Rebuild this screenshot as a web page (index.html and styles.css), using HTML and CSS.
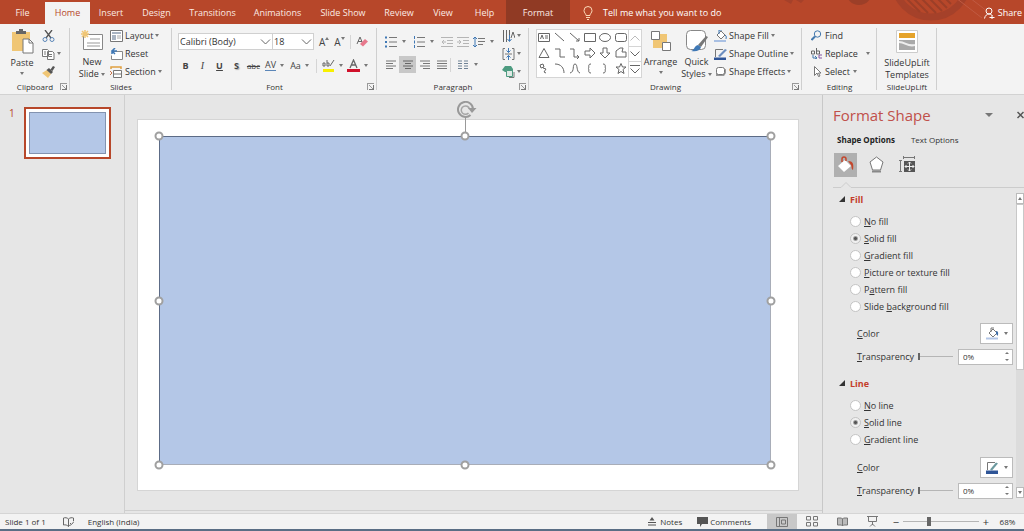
FILE: index.html
```html
<!DOCTYPE html>
<html lang="en">
<head>
<meta charset="utf-8">
<title>Presentation editor</title>
<link rel="stylesheet" href="styles.css">
</head>
<body>
<header class="titlebar">
  <svg class="banner-art" viewBox="0 0 240 24" aria-hidden="true">
    <g fill="none" stroke="#9c3f28">
      <circle cx="75" cy="-8" r="10" stroke-width="6"/>
      <circle cx="147" cy="-20" r="37" stroke-width="7" stroke="#a5412a"/>
      <path d="M120 -4l16 16M127 -4l17 17M135 -4l17 17M143 -4l15 15M151 -4l12 12M159 -4l8 8" stroke-width="2"/>
      <path d="M172 -2l26 20M186 -2l22 17" stroke-width="1" stroke="#c05a42"/>
    </g>
    <path d="M0 0h9l-2 4zM12 0h8l-3 3z" fill="#a5412a"/>
  </svg>
  <nav class="tabs">
    <button class="tab">File</button>
    <button class="tab tab-active">Home</button>
    <button class="tab">Insert</button>
    <button class="tab">Design</button>
    <button class="tab">Transitions</button>
    <button class="tab">Animations</button>
    <button class="tab">Slide Show</button>
    <button class="tab">Review</button>
    <button class="tab">View</button>
    <button class="tab">Help</button>
    <button class="tab tab-context">Format</button>
  </nav>
  <button class="tell-me">
    <svg width="10" height="14" viewBox="0 0 10 14" fill="none" stroke="#fbd9b8"><path d="M3 9.500C3 7.500 1 7 1 4.500a4 4 0 0 1 8 0C9 7 7 7.500 7 9.500zM3 11.500h4M4 13.500h2"/></svg>
    Tell me what you want to do
  </button>
  <button class="share">
    <svg width="11" height="12" viewBox="0 0 11 12" fill="none" stroke="#fff"><circle cx="5" cy="4" r="3"/><path d="M.5 11.500C1 8.500 3 7 5 7c1.500 0 2.500.6 3.200 1.500M5.500 10.500h5M8 8v4"/></svg>
    Share
  </button>
</header>

<section class="ribbon">
  <div class="group">
    <div class="group-body">
      <button class="big paste">
        <svg width="23" height="25" viewBox="0 0 23 25"><path d="M1 3h18v19H1z" fill="#f0c675"/><path d="M5 5V2h3V0h4v2h3v3z" fill="#666"/><path d="M12 10h6l4 4v10H12z" fill="#fff" stroke="#777"/><path d="M18 10v4h4" fill="none" stroke="#777"/></svg>
        <span>Paste</span><i class="caret"></i>
      </button>
      <div class="rows">
        <button class="cmd" aria-label="Cut"><svg width="13" height="12" viewBox="0 0 13 12" fill="none"><path d="M3 0l6 8M10 0L4 8" stroke="#555" stroke-width="1.300"/><circle cx="3" cy="9.500" r="2" stroke="#5b86b8"/><circle cx="10" cy="9.500" r="2" stroke="#5b86b8"/></svg></button>
        <button class="cmd" aria-label="Copy"><svg width="13" height="12" viewBox="0 0 13 12" fill="#fff" stroke="#777"><path d="M.5 1.500h5l1 1v6h-6zM5.500 3.500h5l1.500 1.500v6.500H5.500z"/><path d="M2 4h2M2 6h2M7 6.500h3M7 8.500h3"/></svg><i class="caret"></i></button>
        <button class="cmd" aria-label="Format Painter"><svg width="13" height="12" viewBox="0 0 13 12"><path d="M0 7l5-3 4 4-3 4z" fill="#f0c675"/><path d="M4.500 4L7 2l4 4-2 2zM8.500 3.500L11 0l2 1-2.500 4z" fill="#555"/></svg></button>
      </div>
    </div>
    <div class="group-name">Clipboard</div>
    <button class="launcher" aria-label="Clipboard settings"></button>
  </div>

  <div class="group">
    <div class="group-body">
      <button class="big new-slide">
        <svg width="23" height="22" viewBox="0 0 23 22"><path d="M2.500 4.500h19v15h-19z" fill="#fff" stroke="#888"/><path d="M9 9h10M6 13h13M6 16h13" stroke="#999"/><path d="M4 0v8M0 4h8M1 1l6 6M7 1L1 7" stroke="#f0c675" stroke-width="1.500"/></svg>
        <span>New<br>Slide <i class="caret"></i></span>
      </button>
      <div class="rows">
        <button class="cmd"><svg width="13" height="12" viewBox="0 0 13 12"><path d="M.5.500h12v11H.5z" fill="#fff" stroke="#777"/><path d="M2 2h9v2H2zM2 5h4v5H2z" fill="#a9b4c2"/><path d="M7 6h4M7 8h4" stroke="#aaa"/></svg>Layout <i class="caret"></i></button>
        <button class="cmd"><svg width="13" height="12" viewBox="0 0 13 12"><path d="M3.500 3.500h9v8h-11v-4" fill="#fff" stroke="#888"/><path d="M2 6V3h5M5 0L2 3l3 3" fill="none" stroke="#3f78b5" stroke-width="1.500"/></svg>Reset</button>
        <button class="cmd"><svg width="13" height="12" viewBox="0 0 13 12"><path d="M1 3V1h10v2" fill="none" stroke="#e0a040" stroke-width="1.500"/><path d="M3.500 4.500h8v7h-8zM3.500 8h8" fill="#fff" stroke="#777"/><path d="M0 5l2 2-2 2" fill="none" stroke="#c9744a"/></svg>Section <i class="caret"></i></button>
      </div>
    </div>
    <div class="group-name">Slides</div>
  </div>

  <div class="group">
    <div class="group-body stack">
      <div class="line font-line">
        <label class="combo combo-font"><select aria-label="Font"><option>Calibri (Body)</option></select><svg width="11" height="6" viewBox="0 0 11 6"><path d="M1 .5l4.500 4.500L10 .5" fill="none" stroke="#666"/></svg></label>
        <label class="combo combo-size"><select aria-label="Font size"><option>18</option></select><svg width="11" height="6" viewBox="0 0 11 6"><path d="M1 .5l4.500 4.500L10 .5" fill="none" stroke="#666"/></svg></label>
        <button class="letter grow">A<i class="up"></i></button>
        <button class="letter shrink">A<i class="caret"></i></button>
        <i class="sep"></i>
        <button class="letter" aria-label="Clear formatting"><svg width="12" height="12" viewBox="0 0 12 12"><path d="M1 8L4 1l2.500 6M2 5.500h4" fill="none" stroke="#666"/><path d="M4 8l5-5 3 2.500-5 5z" fill="#e7788c"/></svg></button>
      </div>
      <div class="line style-line">
        <button class="letter"><b>B</b></button>
        <button class="letter serif"><em>I</em></button>
        <button class="letter"><b><u>U</u></b></button>
        <button class="letter shadow"><b>S</b></button>
        <button class="letter abc"><s>abc</s></button>
        <button class="letter spacing"><span>AV</span><i class="caret"></i></button>
        <button class="letter"><span>Aa</span><i class="caret"></i></button>
        <i class="sep"></i>
        <button class="letter" aria-label="Highlight"><svg width="13" height="13" viewBox="0 0 13 13"><path d="M1 4h2v3H1zM5 1v6h2V4H5M8 7l4-6" fill="none" stroke="#666"/><path d="M1 10h11v3H1z" fill="#f8f000"/></svg><i class="caret"></i></button>
        <button class="letter" aria-label="Font color"><svg width="13" height="13" viewBox="0 0 13 13"><path d="M3 9l3.500-8L10 9M4 6h5" fill="none" stroke="#666" stroke-width="1.300"/><path d="M0 10h13v3H0z" fill="#d0102a"/></svg><i class="caret"></i></button>
      </div>
    </div>
    <div class="group-name">Font</div>
    <button class="launcher" aria-label="Font settings"></button>
  </div>

  <div class="group">
    <div class="group-body paragraph">
      <div class="stack">
        <div class="line list-line">
          <button class="ico" aria-label="Bullets"><svg width="12" height="12" viewBox="0 0 12 12"><path d="M4 1.500h8M4 6h8M4 10.500h8" stroke="#777"/><path d="M0 .500h2v2H0zM0 5h2v2H0zM0 9.500h2v2H0z" fill="#3f78b5"/></svg><i class="caret"></i></button>
          <button class="ico ico-spaced" aria-label="Numbering"><svg width="12" height="12" viewBox="0 0 12 12"><path d="M4 1.500h8M4 6h8M4 10.500h8" stroke="#777"/><path d="M1.500 0v3M1.500 4.500v3M1.500 9v3" stroke="#3f78b5"/></svg><i class="caret"></i></button>
          <button class="ico" aria-label="Decrease indent"><svg width="12" height="12" viewBox="0 0 12 12"><path d="M0 1.500h12M6 4.500h6M6 7.500h6M0 10.500h12M5 6H1m2-2L1 6l2 2" fill="none" stroke="#b5b5b5"/></svg></button>
          <button class="ico" aria-label="Increase indent"><svg width="12" height="12" viewBox="0 0 12 12"><path d="M0 1.500h12M6 4.500h6M6 7.500h6M0 10.500h12M0 6h4M2 4l2 2-2 2" fill="none" stroke="#b5b5b5"/></svg></button>
          <button class="ico" aria-label="Line spacing"><svg width="12" height="12" viewBox="0 0 12 12" fill="none"><path d="M5 2.500h7M5 5.500h7M5 8.500h5" stroke="#777"/><path d="M2 1v10M0 3l2-2 2 2M0 9l2 2 2-2" stroke="#3f78b5"/></svg><i class="caret"></i></button>
        </div>
        <div class="line align-line">
          <button class="ico" aria-label="Align left"><svg width="12" height="10" viewBox="0 0 12 10"><path d="M1 1h10M1 3.500h7M1 6h10M1 8.500h7" stroke="#777"/></svg></button>
          <button class="ico ico-on" aria-label="Center"><svg width="12" height="10" viewBox="0 0 12 10"><path d="M1 1h10M3 3.500h6M1 6h10M3 8.500h6" stroke="#666"/></svg></button>
          <button class="ico" aria-label="Align right"><svg width="12" height="10" viewBox="0 0 12 10"><path d="M1 1h10M4 3.500h7M1 6h10M4 8.500h7" stroke="#777"/></svg></button>
          <button class="ico" aria-label="Justify"><svg width="12" height="10" viewBox="0 0 12 10"><path d="M1 1h10M1 3.500h10M1 6h10M1 8.500h10" stroke="#777"/></svg></button>
          <i class="sep"></i>
          <button class="ico" aria-label="Columns"><svg width="12" height="10" viewBox="0 0 12 10"><path d="M1 1h4M7 1h4M1 3.500h4M7 3.500h4M1 6h4M7 6h4M1 8.500h4M7 8.500h4" stroke="#6f8295"/></svg><i class="caret"></i></button>
        </div>
      </div>
      <div class="rows">
        <button class="cmd" aria-label="Text direction"><svg width="13" height="12" viewBox="0 0 13 12" fill="none"><path d="M1.500 0v12M4.500 0v12M7.500 0v6M9 8l2-6 2 6" stroke="#666"/><path d="M7.500 5v6M5.500 9l2 2.500 2-2.500" stroke="#3f78b5"/></svg><i class="caret"></i></button>
        <button class="cmd" aria-label="Align text"><svg width="13" height="12" viewBox="0 0 13 12" fill="none"><path d="M3 .5H1v11h2M10 .5h2v11h-2M3 6h7" stroke="#777"/><path d="M6.500 0v4.500M4.500 2.500l2 2 2-2M6.500 12V7.500M4.500 9.500l2-2 2 2" stroke="#3f78b5"/></svg><i class="caret"></i></button>
        <button class="cmd" aria-label="SmartArt"><svg width="13" height="12" viewBox="0 0 13 12"><path d="M0 4l3-4h6l2 3v3H3z" fill="#4d9b80"/><path d="M4.500 4.500h6v6h-6z" fill="#dfe9e5" stroke="#4d9b80"/><path d="M7 11.500h5V6" fill="none" stroke="#777"/></svg><i class="caret"></i></button>
      </div>
    </div>
    <div class="group-name">Paragraph</div>
    <button class="launcher" aria-label="Paragraph settings"></button>
  </div>

  <div class="group">
    <div class="group-body drawing">
      <div class="gallery">
        <svg width="91" height="46" viewBox="0 0 91 46" fill="none" stroke="#666">
          <path d="M1.500 3.500h11v8h-11zM3.500 9l1.500-4 1.500 4M8 6h3M8 8h3M18 3l9 8M33 3l9 8m-3 0h3V8M47.500 3.500h11v8h-11z"/>
          <ellipse cx="68" cy="7.500" rx="5.500" ry="4"/><rect x="78.500" y="3.500" width="11" height="8" rx="2"/>
          <path d="M7 18.500l5 9H2zM18 19h5v8h5M33 19h4v8h5m-2-2l2 2-2 2M48 21h5v-3l5 5-5 5v-3h-5zM66 18h4v5h3l-5 5-5-5h3zM79 27v-6l4-3h3l-1 4h4v5z"/>
          <path d="M3 35l3-1 1 3-3 1zM6 38l3 1-2 3 2 1M18 34c6 0 9 4 9 9M33 43c5-1 2-9 5-9s1 8 5 9M54 34c-4 0-1 4-3 4.500 2 .5-1 4.500 3 4.500M66 34c4 0 1 4 3 4.500-2 .5 1 4.500-3 4.500M84 33.500l1.500 3.500h3.500l-3 2.500 1 4-3-2-3 2 1-4-3-2.500h3.500z"/>
        </svg>
        <div class="gallery-nav">
          <button aria-label="Scroll up"><svg width="10" height="6" viewBox="0 0 10 6"><path d="M.5 5.500L5 1l4.500 4.500" fill="none" stroke="#bbb"/></svg></button>
          <button aria-label="Scroll down"><svg width="10" height="6" viewBox="0 0 10 6"><path d="M.5.500L5 5 9.500.500" fill="none" stroke="#666"/></svg></button>
          <button aria-label="More shapes"><svg width="10" height="9" viewBox="0 0 10 9"><path d="M0 .5h10M.5 3.500L5 8l4.500-4.500" fill="none" stroke="#666"/></svg></button>
        </div>
      </div>
      <button class="big arrange">
        <svg width="22" height="22" viewBox="0 0 22 22"><path d="M8 4h9v8H8zM3 10h9v8H3z" fill="#f0c675"/><path d="M1.500 1.500h8v8h-8zM12.500 12.500h8v8h-8z" fill="#fff" stroke="#777"/></svg>
        <span>Arrange</span><i class="caret"></i>
      </button>
      <button class="big quick">
        <svg width="23" height="22" viewBox="0 0 23 22"><rect x="1.500" y=".5" width="19" height="19" rx="4" fill="#fff" stroke="#888"/><path d="M21 6l2 1-7 10-3-2z" fill="#777"/><path d="M6 21c3 0 3-5 7-6l3 2c-1 4-5 5-10 4z" fill="#3f78b5"/></svg>
        <span>Quick<br>Styles <i class="caret"></i></span>
      </button>
      <div class="rows">
        <button class="cmd"><svg width="13" height="12" viewBox="0 0 13 12"><path d="M3 5l4-4 4 4-4 4z" fill="#fff" stroke="#777"/><path d="M5 4V0h3M11 5c2 1 1 3 1 4" fill="none" stroke="#3f78b5"/><path d="M0 10h12v2H0z" fill="#a9c0e3"/></svg>Shape Fill <i class="caret"></i></button>
        <button class="cmd"><svg width="13" height="12" viewBox="0 0 13 12"><path d="M1.500 9V1.500H9" fill="none" stroke="#777"/><path d="M4 8l7-7 2 1-7 7z" fill="#6c8ebf"/><path d="M0 9.500h12V12H0z" fill="#2f5597"/></svg>Shape Outline <i class="caret"></i></button>
        <button class="cmd"><svg width="13" height="12" viewBox="0 0 13 12"><path d="M2 5v5h8l2-3V3z" fill="#999"/><rect x="2.500" y="1.500" width="8" height="7" rx="2" fill="#fff" stroke="#777"/></svg>Shape Effects <i class="caret"></i></button>
      </div>
    </div>
    <div class="group-name">Drawing</div>
    <button class="launcher" aria-label="Drawing settings"></button>
  </div>

  <div class="group">
    <div class="group-body editing">
      <div class="rows">
        <button class="cmd"><svg width="11" height="11" viewBox="0 0 11 11" fill="none" stroke="#4378ad"><circle cx="6.500" cy="4" r="3.200"/><path d="M4 6.500L.500 10" stroke-width="2"/></svg>Find</button>
        <button class="cmd"><svg width="11" height="11" viewBox="0 0 11 11" fill="none"><path d="M.5 3h3v3h-3zM5.500 0v6h3V3h-3" stroke="#666"/><path d="M2 7v3h4M4 8l2 2-2 1" stroke="#4378ad"/><path d="M11 7H8v3h3" stroke="#8655a0"/></svg>Replace <i class="caret wide"></i></button>
        <button class="cmd"><svg width="11" height="11" viewBox="0 0 11 11"><path d="M3.500.500v9L6 7l1.500 3.500 1.500-.5L7.500 7H10z" fill="#fff" stroke="#777"/></svg>Select <i class="caret"></i></button>
      </div>
    </div>
    <div class="group-name">Editing</div>
  </div>

  <div class="group">
    <div class="group-body addin">
      <button class="big">
        <svg width="22" height="23" viewBox="0 0 22 23"><path d="M.5.500h21v22H.5z" fill="#fff" stroke="#ccc"/><path d="M3 3h16v5H3z" fill="#e5a32b"/><path d="M3 10h16v10H3z" fill="#a9a9a9"/><path d="M3 12c7 0 8 5 16 3" fill="none" stroke="#eee" stroke-width="2"/></svg>
        <span>SlideUpLift<br>Templates</span>
      </button>
    </div>
    <div class="group-name">SlideUpLift</div>
  </div>
</section>

<main class="workspace">
  <aside class="thumbs">
    <span class="thumb-number">1</span>
    <button class="thumb" aria-label="Slide 1"><span class="thumb-shape"></span></button>
  </aside>
  <section class="canvas">
    <div class="slide">
      <div class="shape">
        <i class="stem"></i>
        <svg class="rotate" width="20" height="18" viewBox="0 0 20 18" fill="none"><path d="M13.500 14A7.500 7.500 0 1 1 16 8" stroke="#999" stroke-width="2"/><path d="M11.500 12A4.200 4.200 0 1 1 12.500 8" stroke="#a5a5a5" stroke-width="1.500"/><path d="M11 7h8.500L15 12z" fill="#999"/></svg>
        <i class="handle n w"></i><i class="handle n c"></i><i class="handle n e"></i>
        <i class="handle m w"></i><i class="handle m e"></i>
        <i class="handle s w"></i><i class="handle s c"></i><i class="handle s e"></i>
      </div>
    </div>
  </section>
  <aside class="panel">
    <div class="panel-head">
      <h1>Format Shape</h1>
      <button class="pane-menu" aria-label="Pane options"><i class="caret"></i></button>
      <button class="pane-close" aria-label="Close"><svg width="7" height="8" viewBox="0 0 7 8"><path d="M.5 1l6 6M6.500 1l-6 6" stroke="#555" stroke-width="1.500"/></svg></button>
    </div>
    <div class="panel-tabs"><button class="on">Shape Options</button><button>Text Options</button></div>
    <div class="panel-icons">
      <button class="on" aria-label="Fill and line"><svg width="19" height="18" viewBox="0 0 19 18"><path d="M12 5c5 0 6 3 5 9-2-1-1-3-2-5z" fill="#c4472d"/><path d="M2 10l7-6 6 6-7 6z" fill="#fff"/><path d="M6 6V3a2 2 0 0 1 4 0v2" fill="none" stroke="#c4472d" stroke-width="1.500"/></svg></button>
      <button aria-label="Effects"><svg width="17" height="18" viewBox="0 0 17 18"><path d="M8.500 1l6.500 5-2.500 8h-8L2 6z" fill="#fff" stroke="#777"/><path d="M4 15.500h9" stroke="#888" stroke-width="2"/></svg></button>
      <button aria-label="Size and properties"><svg width="17" height="18" viewBox="0 0 17 18" fill="none"><path d="M4 1.500h12M4.500 0v3M15.500 0v3M1.500 4v12M0 4.500h3M0 15.500h3" stroke="#777"/><path d="M5 5h11v11H5z" fill="#555"/><path d="M10.500 6v9M6 10.500h9M9 7.500l1.500-1.500L12 7.500M9 13.500l1.500 1.500 1.500-1.500M7.500 9L6 10.500 7.500 12M13.500 9l1.500 1.500-1.500 1.500" stroke="#eee"/></svg></button>
    </div>
    <div class="divider"><svg height="7" width="22" viewBox="0 0 22 7"><path d="M0 6.500h8l5-5 5 5h4" fill="none" stroke="#ccc"/></svg></div>
    <div class="panel-scroll">
      <div class="options">
        <section>
          <h2><svg width="6" height="6" viewBox="0 0 6 6"><path d="M6 0v6H0z" fill="#333"/></svg>Fill</h2>
          <div class="radios">
            <label><input type="radio" name="fill"><span><u>N</u>o fill</span></label>
            <label><input type="radio" name="fill" checked><span><u>S</u>olid fill</span></label>
            <label><input type="radio" name="fill"><span><u>G</u>radient fill</span></label>
            <label><input type="radio" name="fill"><span><u>P</u>icture or texture fill</span></label>
            <label><input type="radio" name="fill"><span>P<u>a</u>ttern fill</span></label>
            <label><input type="radio" name="fill"><span>Slide <u>b</u>ackground fill</span></label>
          </div>
          <div class="field"><span><u>C</u>olor</span><button class="swatch" aria-label="Fill color"><svg width="13" height="13" viewBox="0 0 13 13"><path d="M3 6l4-4 4 4-4 4z" fill="#fff" stroke="#777"/><path d="M5 5V1h3" fill="none" stroke="#777"/><path d="M10 4c3 0 2 3 2 5l-2-2z" fill="#3f6ea8"/><path d="M0 10.500h12v2H0z" fill="#b4c7e7"/></svg><i class="caret"></i></button></div>
          <div class="field"><label for="fill-t"><u>T</u>ransparency</label><input class="slider" type="range" value="0" aria-label="Fill transparency slider"><span class="spin"><input id="fill-t" type="text" value="0%"><span class="arrows"><i class="up"></i><i class="caret"></i></span></span></div>
        </section>
        <section>
          <h2><svg width="6" height="6" viewBox="0 0 6 6"><path d="M6 0v6H0z" fill="#333"/></svg>Line</h2>
          <div class="radios">
            <label><input type="radio" name="line"><span><u>N</u>o line</span></label>
            <label><input type="radio" name="line" checked><span><u>S</u>olid line</span></label>
            <label><input type="radio" name="line"><span><u>G</u>radient line</span></label>
          </div>
          <div class="field"><span><u>C</u>olor</span><button class="swatch" aria-label="Line color"><svg width="13" height="13" viewBox="0 0 13 13"><path d="M1.500 9V1.500H9" fill="none" stroke="#777"/><path d="M4 8.500l6-7 2 1-6 7z" fill="#6c9aa0"/><path d="M0 9.500h12V13H0z" fill="#2f5597"/></svg><i class="caret"></i></button></div>
          <div class="field"><label for="line-t"><u>T</u>ransparency</label><input class="slider" type="range" value="0" aria-label="Line transparency slider"><span class="spin"><input id="line-t" type="text" value="0%"><span class="arrows"><i class="up"></i><i class="caret"></i></span></span></div>
        </section>
      </div>
      <div class="scrollbar"><button aria-label="Scroll panel up"><i class="up"></i></button><div class="scroll-thumb"></div><button aria-label="Scroll panel down"><i class="caret"></i></button></div>
    </div>
  </aside>
</main>

<footer class="status">
  <span>Slide 1 of 1</span>
  <button class="proof" aria-label="Proofing"><svg width="11" height="10" viewBox="0 0 11 10" fill="none" stroke="#666"><path d="M5.500 2v7.500M5.500 2C4 .5 2 .5.500 1v7c2-.5 3.500 0 5 1.500C6 8.500 7 8 8 8M5.500 2C7 .5 9 .5 10.500 1v3M7 6l1.500 1.500L11 4.500"/></svg></button>
  <button>English (India)</button>
  <div class="views">
    <button class="notes"><svg width="8" height="9" viewBox="0 0 8 9"><path d="M0 5.500h8M0 8h8" stroke="#555"/><path d="M4 0l2.500 3.500h-5z" fill="#555"/></svg>Notes</button>
    <button class="comments"><svg width="11" height="10" viewBox="0 0 11 10"><path d="M0 0h11v7H5l-2 3V7H0z" fill="#555"/></svg>Comments</button>
    <button class="view on" aria-label="Normal view"><svg width="12" height="10" viewBox="0 0 12 10" fill="none" stroke="#777"><path d="M.5.500h11v9H.5zM3.500.500v9M5.500 3h4v4h-4z"/></svg></button>
    <button class="view" aria-label="Slide sorter"><svg width="12" height="11" viewBox="0 0 12 11" fill="none" stroke="#777"><path d="M.5.500h4v3.500h-4zM7.500.500h4v3.500h-4zM.5 6.500h4V10h-4zM7.500 6.500h4V10h-4z"/></svg></button>
    <button class="view" aria-label="Reading view"><svg width="11" height="10" viewBox="0 0 11 10"><path d="M.5 1h4l1 1 1-1h4v7h-4l-1 1-1-1h-4z" fill="#bbb" stroke="#777"/><path d="M5.500 2v7" stroke="#777"/></svg></button>
    <button class="view" aria-label="Slide show"><svg width="11" height="11" viewBox="0 0 11 11" fill="none" stroke="#777"><path d="M0 .5h11M1.500 1v4.500h8V1M5.500 6v3M3 10.500L5.500 8 8 10.500"/></svg></button>
    <button class="zoom-step">−</button>
    <input class="zoom" type="range" min="0" max="100" value="33" aria-label="Zoom">
    <button class="zoom-step">+</button>
    <button class="zoom-value">68%</button>
  </div>
</footer>
</body>
</html>
```
FILE: styles.css
```css
* { box-sizing: border-box; }
html, body { height: 100%; margin: 0; }
body {
  display: flex;
  flex-direction: column;
  overflow: hidden;
  background: #e6e6e6;
  color: #333;
  font: 8px/12px "Open Sans", "Noto Sans", sans-serif;
}
button, input, select { font: inherit; color: inherit; }
button {
  display: inline-flex;
  align-items: center;
  justify-content: center;
  padding: 0;
  border: 0;
  background: none;
  white-space: nowrap;
}
svg { display: block; flex: none; }
.caret, .up {
  display: inline-block;
  flex: none;
  border: 2px solid transparent;
  border-top: 3px solid #777;
  border-bottom: 0;
}
.up { border-top: 0; border-bottom: 3px solid #777; }

/* Title bar */
.titlebar { position: relative; display: flex; flex: none; height: 24px; background: #b7472a; color: #fff; }
.banner-art { position: absolute; top: 0; right: 0; width: 240px; height: 24px; }
.tabs {
  display: grid;
  grid-template-columns: 45px 45px 42px 49px 63px 67px 64px 48px 40px 43px 64px;
}
.tab { padding-top: 2px; color: #fbeae4; font-size: 9px; }
.tab-active { margin-top: 2px; padding-top: 0; background: #f3f3f3; color: #b7472a; }
.tab-context { background: #903a24; }
.tell-me { gap: 10px; margin-left: 13px; padding-top: 2px; font-size: 9px; }
.share { position: relative; gap: 3px; margin-left: auto; margin-right: 2px; padding-top: 2px; font-size: 9px; }

/* Ribbon */
.ribbon {
  display: grid;
  grid-template-columns: 70px 102px 205px 152px 273px 75px 60px;
  flex: none;
  height: 71px;
  background: #f3f3f3;
  border-bottom: 1px solid #d2d2d2;
  font-size: 9px;
}
.group { position: relative; display: flex; flex-direction: column; }
.group::after { content: ""; position: absolute; top: 4px; bottom: 4px; right: 0; width: 1px; background: #cfcfcf; }
.group-body { display: flex; flex: 1; padding-top: 3px; }
.group-name { height: 13px; text-align: center; font-size: 8px; line-height: 12px; }
.launcher {
  position: absolute;
  right: 3px;
  bottom: 4px;
  width: 7px;
  height: 7px;
  align-items: flex-end;
  justify-content: flex-end;
  border: 1px solid #999;
  border-right: 0;
  border-bottom: 0;
}
.launcher::after { content: ""; width: 4px; height: 4px; border: 1px solid #777; border-top: 0; border-left: 0; background: linear-gradient(45deg, transparent 40%, #999 40% 60%, transparent 60%) no-repeat; }
.big { flex-direction: column; justify-content: flex-start; align-items: center; padding-top: 3px; line-height: 12px; }
.big svg { margin-bottom: 4px; }
.big .caret { vertical-align: middle; }
.paste { width: 40px; margin-left: 2px; padding-top: 2px; }
.paste svg { margin-bottom: 3px; }
.paste .caret { margin-top: 3px; }
.new-slide { width: 36px; margin: 0 0 0 4px; }
.rows { display: grid; grid-auto-rows: 17px; gap: 1px; align-content: start; }
.cmd { justify-content: flex-start; gap: 2px; }
.stack { display: flex; flex-direction: column; padding-top: 9px; }
.line { display: flex; flex: none; align-items: center; height: 17px; }
.font-line { padding-left: 6px; }
.combo { display: flex; align-items: center; height: 17px; background: #fff; border: 1px solid #d0d0d0; padding-right: 1px; }
.combo select { appearance: none; flex: 1; min-width: 0; padding: 0 0 0 1px; border: 0; background: none; line-height: 14px; }
.combo-font { width: 95px; }
.combo-size { width: 41px; border-left: 0; }
.letter { gap: 4px; color: #444; }
.sep { width: 1px; height: 14px; background: #d5d5d5; }
.font-line .letter { margin-left: 5px; font-size: 10px; }
.font-line .sep { margin-left: 5px; }
.grow, .shrink { gap: 0; }
.grow .up, .shrink .caret { margin-bottom: 7px; }
.style-line {
  display: grid;
  grid-template-columns: 17px 17px 17px 17px 17px 25px 25px 8px 24px 26px;
  justify-items: center;
  margin-top: 7px;
  padding-left: 5px;
}
.serif { font-family: "Liberation Serif", serif; font-size: 10px; }
.shadow { text-shadow: 1px 1px 1px #aaa; }
.abc { font-size: 8px; }
.spacing span { border-bottom: 1px solid #5b86b8; line-height: 10px; }
.paragraph { gap: 4px; }
.paragraph .stack { padding: 6px 0 0 5px; }
.ico { gap: 5px; }
.list-line { padding-left: 3px; }
.list-line .ico { margin-right: 4px; }
.list-line .ico:first-child, .list-line .ico-spaced { margin-right: 7px; }
.align-line { margin-top: 6px; }
.align-line .ico { width: 17px; height: 17px; }
.align-line .ico:last-child { width: 32px; }
.ico-on { background: #c8c8c8; }
.drawing { padding-left: 7px; }
.gallery { display: flex; align-self: flex-start; height: 49px; margin-top: 2px; background: #fff; border: 1px solid #d5d5d5; }
.gallery-nav { display: grid; grid-template-rows: repeat(3, 1fr); width: 13px; border-left: 1px solid #d5d5d5; }
.gallery-nav button + button { border-top: 1px solid #d5d5d5; }
.arrange { width: 37px; }
.arrange .caret { margin-top: 3px; }
.quick { width: 35px; }
.editing { padding-left: 9px; }
.editing .cmd { gap: 3px; }
.wide { margin-left: 5px; }
.addin { justify-content: center; }

/* Workspace */
.workspace { display: flex; flex: 1; min-height: 0; }
.thumbs { display: flex; flex: none; align-items: flex-start; width: 125px; padding: 12px 0 0 9px; border-right: 1px solid #cfcfcf; }
.thumb-number { width: 15px; color: #b7472a; font-size: 10px; }
.thumb { width: 87px; height: 52px; padding: 3px; border: 2px solid #b7472a; background: #fff; }
.thumb-shape { flex: 1; align-self: stretch; background: #b4c7e7; border: 1px solid #8393b0; }
.canvas { display: flex; flex: 1; margin-bottom: 2px; padding: 24px 23px 19px 12px; border-bottom: 1px solid #cfcfcf; }
.slide { display: flex; flex: 1; padding: 16px 27px 25px 21px; background: #fff; border: 1px solid #d5d5d5; }
.shape { position: relative; flex: 1; background: #b4c7e7; box-shadow: inset 1px 1px #5c6b86, inset -1px -1px #a8adb8; }
.handle { position: absolute; width: 9px; height: 9px; border: 2px solid #a0a0a0; border-radius: 50%; background: #fff; transform: translate(-50%, -50%); }
.n { top: 0; }
.m { top: 50%; }
.s { top: 100%; }
.w { left: 0; }
.c { left: 50%; }
.e { left: 100%; }
.stem { position: absolute; left: 50%; bottom: 100%; width: 1px; height: 20px; background: #999; }
.rotate { position: absolute; left: 50%; bottom: 100%; margin: 0 0 17px -8px; }

/* Format pane */
.panel { display: flex; flex: none; flex-direction: column; width: 202px; border-left: 1px solid #c8c8c8; font-size: 9px; }
.panel-head, .panel-tabs, .panel-icons, .divider { display: flex; flex: none; }
.panel-head { align-items: center; height: 39px; padding-left: 10px; }
h1 { margin: 0; color: #c0504a; font-size: 15px; font-weight: 400; line-height: 20px; }
.pane-menu { margin-left: auto; margin-right: 24px; }
.pane-menu .caret { border-width: 4px 4px 0; }
.pane-close { width: 7px; }
.panel-tabs { gap: 16px; height: 12px; margin-bottom: 7px; padding-left: 14px; font-size: 8px; }
.panel-tabs .on { font-weight: 700; color: #222; }
.panel-icons { gap: 8px; padding-left: 11px; }
.panel-icons button { width: 23px; height: 24px; }
.panel-icons .on { background: #b0b0b0; }
.divider { margin: 4px 0 0 10px; }
.divider::after { content: ""; flex: 1; border-bottom: 1px solid #ccc; }
.panel-scroll { display: flex; flex: 1; min-height: 0; margin: 5px 0 15px; }
.options { flex: 1; min-width: 0; padding: 0 3px 0 16px; }
h2 { display: flex; align-items: center; gap: 5px; height: 13px; margin: 0; color: #c43d2a; font-size: 9px; font-weight: 700; }
h2 svg { margin-bottom: 2px; }
.radios { margin: 7px 0 7px 11px; }
.radios label { display: flex; align-items: center; gap: 3px; height: 17px; }
.radios input { appearance: none; width: 11px; height: 11px; margin: 0; border: 1px solid #c4c4c4; border-radius: 50%; background: #fff; }
.radios input:checked { background: radial-gradient(circle, #555 1px, #f0f0f0 3px); }
.field { display: flex; align-items: center; height: 23px; padding-left: 18px; }
.swatch { gap: 5px; width: 33px; height: 21px; margin-left: auto; border: 1px solid #bbb; background: #fff; }
.slider, .zoom { appearance: none; height: 12px; margin: 0; background: linear-gradient(#b5b5b5, #b5b5b5) center / 100% 1px no-repeat; }
.slider { flex: 1; min-width: 0; margin: 0 5px 0 4px; }
.slider::-webkit-slider-thumb { appearance: none; width: 2px; height: 7px; background: #666; }
.spin { display: flex; flex: none; width: 55px; height: 16px; border: 1px solid #bbb; background: #fff; }
.spin input { flex: 1; min-width: 0; padding: 0 0 0 4px; border: 0; background: none; font-size: 8px; }
.arrows { display: flex; flex-direction: column; align-items: center; justify-content: space-around; width: 11px; }
.arrows .up { border-bottom-width: 2px; }
.arrows .caret { border-top-width: 2px; }
section + section h2 { margin-top: 9px; }
section + section .radios { margin-bottom: 8px; }
.scrollbar { display: flex; flex: none; flex-direction: column; width: 8px; background: #dcdcdc; }
.scrollbar button { height: 11px; border: 1px solid #bbb; background: #fff; }
.scroll-thumb { height: 166px; margin-bottom: auto; background: #fff; border: 1px solid #c8c8c8; }

/* Status bar */
.status { display: flex; flex: none; align-items: center; height: 18px; padding-left: 5px; background: #f3f3f3; border-top: 1px solid #d5d5d5; border-bottom: 2px solid #5a6e85; }
.status button { height: 15px; }
.proof { margin: 0 14px 0 17px; }
.views { display: flex; align-items: center; margin-left: auto; }
.notes { gap: 4px; margin-right: 15px; }
.comments { gap: 2px; margin-right: 16px; }
.view { width: 30px; }
.view.on { background: #c8c8c8; }
.zoom-step { width: 10px; margin-left: 4px; font-size: 11px; }
.zoom { width: 76px; margin-left: 2px; }
.zoom + .zoom-step { margin-left: 2px; }
.zoom::-webkit-slider-thumb { appearance: none; width: 4px; height: 9px; background: #666; }
.zoom-value { width: 33px; }
```
